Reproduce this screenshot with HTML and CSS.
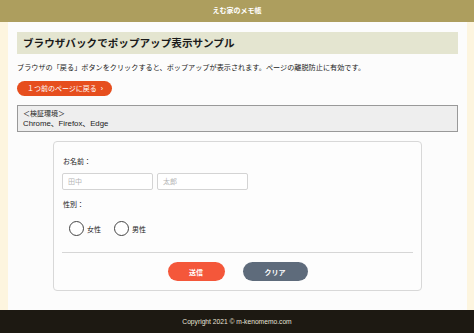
FILE: index.html
```
<!DOCTYPE html>
<html lang="ja">
<head>
    <meta charset="UTF-8">
    <meta name="viewport" content="width=device-width, initial-scale=1.0">
    <title>ブラウザバックでポップアップ表示サンプル</title>
    <link rel="stylesheet" href="styles.css">
</head>
<body>
    <header class="site-header">えむ家のメモ帳</header>

    <div class="page">
        <main class="main">
            <h1 class="page-title">ブラウザバックでポップアップ表示サンプル</h1>
            <p class="lead">ブラウザの「戻る」ボタンをクリックすると、ポップアップが表示されます。ページの離脱防止に有効です。</p>

            <a class="back-button" href="#">１つ前のページに戻る <span class="arrow">›</span></a>

            <div class="env-box">
                ＜検証環境＞<br>
                <span class="env-list">Chrome、Firefox、Edge</span>
            </div>

            <form class="form-card">
                <div class="form-label">お名前：</div>
                <div class="name-row">
                    <input class="text-input" type="text" placeholder="田中">
                    <input class="text-input" type="text" placeholder="太郎">
                </div>

                <div class="form-label gender-label">性別：</div>
                <div class="radio-row">
                    <label class="radio-item"><input type="radio" name="gender"> 女性</label>
                    <label class="radio-item"><input type="radio" name="gender"> 男性</label>
                </div>

                <hr class="divider">

                <div class="button-row">
                    <button type="button" class="btn btn-submit">送信</button>
                    <button type="reset" class="btn btn-clear">クリア</button>
                </div>
            </form>
        </main>
    </div>

    <footer class="site-footer">Copyright 2021 © m-kenomemo.com</footer>
</body>
</html>
```

FILE: styles.css
```
body {
    margin: 0;
    font-family: "Liberation Sans", "Noto Sans CJK JP", sans-serif;
    color: #1a1a1a;
    background-color: #fdf5df;
}

.site-header {
    height: 22px;
    line-height: 22px;
    background-color: #ad9e5e;
    color: #fff;
    font-size: 7px;
    font-weight: bold;
    text-align: center;
}

.page {
    padding: 0 7px 0 8px;
}

.main {
    background-color: #fcfcfc;
    padding: 10px 9px 19px;
}

.page-title {
    margin: 0;
    height: 22px;
    line-height: 22px;
    padding-left: 6px;
    background-color: #e4e5d0;
    font-size: 10.6px;
    font-weight: bold;
    color: #1a1a1a;
}

.lead {
    margin: 9px 0 0;
    font-size: 7.15px;
    line-height: 10px;
}

.back-button {
    display: inline-block;
    margin-top: 8px;
    height: 15px;
    line-height: 15px;
    padding: 0 9px 0 10px;
    border-radius: 8px;
    background-color: #e64e1e;
    color: #fff;
    font-size: 7px;
    text-decoration: none;
}

.back-button .arrow {
    margin-left: 2px;
}

.env-box {
    margin-top: 9px;
    padding: 3px 5px;
    background-color: #eeeeee;
    border: 1px solid #999;
    font-size: 7px;
    line-height: 9.5px;
    color: #1a1a1a;
}

.env-list {
    font-size: 7.8px;
}

.form-card {
    width: 351px;
    margin: 9px auto 0;
    padding: 15px 8px 9px;
    background-color: #fdfdfd;
    border: 1px solid #d8d8d8;
    border-radius: 4px;
}

.form-label {
    padding-left: 1px;
    font-size: 7px;
    line-height: 10px;
    color: #1a1a1a;
}

.name-row {
    display: flex;
    gap: 4px;
    margin-top: 6px;
}

.text-input {
    width: 91px;
    height: 17px;
    box-sizing: border-box;
    padding: 0 5px;
    border: 1px solid #d4d4d4;
    border-radius: 2px;
    background: #fff;
    font-family: inherit;
    font-size: 7px;
}

.text-input::placeholder {
    color: #b5b5b5;
}

.gender-label {
    margin-top: 10px;
}

.radio-row {
    display: flex;
    gap: 13px;
    margin-top: 11px;
    padding-left: 7px;
}

.radio-item {
    display: flex;
    align-items: center;
    gap: 3px;
    font-size: 7px;
    color: #1a1a1a;
}

.radio-item input {
    appearance: none;
    -webkit-appearance: none;
    width: 15px;
    height: 15px;
    margin: 0;
    border: 1px solid #444;
    border-radius: 50%;
    background: #fff;
}

.divider {
    margin: 16px 0 0;
    border: 0;
    border-top: 1px solid #d6d6d6;
}

.button-row {
    display: flex;
    justify-content: center;
    gap: 18px;
    margin-top: 9px;
}

.btn {
    height: 19px;
    border: 0;
    border-radius: 10px;
    color: #fff;
    font-family: inherit;
    font-size: 7px;
    font-weight: bold;
}

.btn-submit {
    width: 57px;
    background-color: #f4573a;
}

.btn-clear {
    width: 65px;
    background-color: #5e6b7b;
}

.site-footer {
    height: 23px;
    line-height: 23px;
    background-color: #1d1912;
    color: #e8e4d8;
    font-size: 6.7px;
    text-align: center;
}
```
